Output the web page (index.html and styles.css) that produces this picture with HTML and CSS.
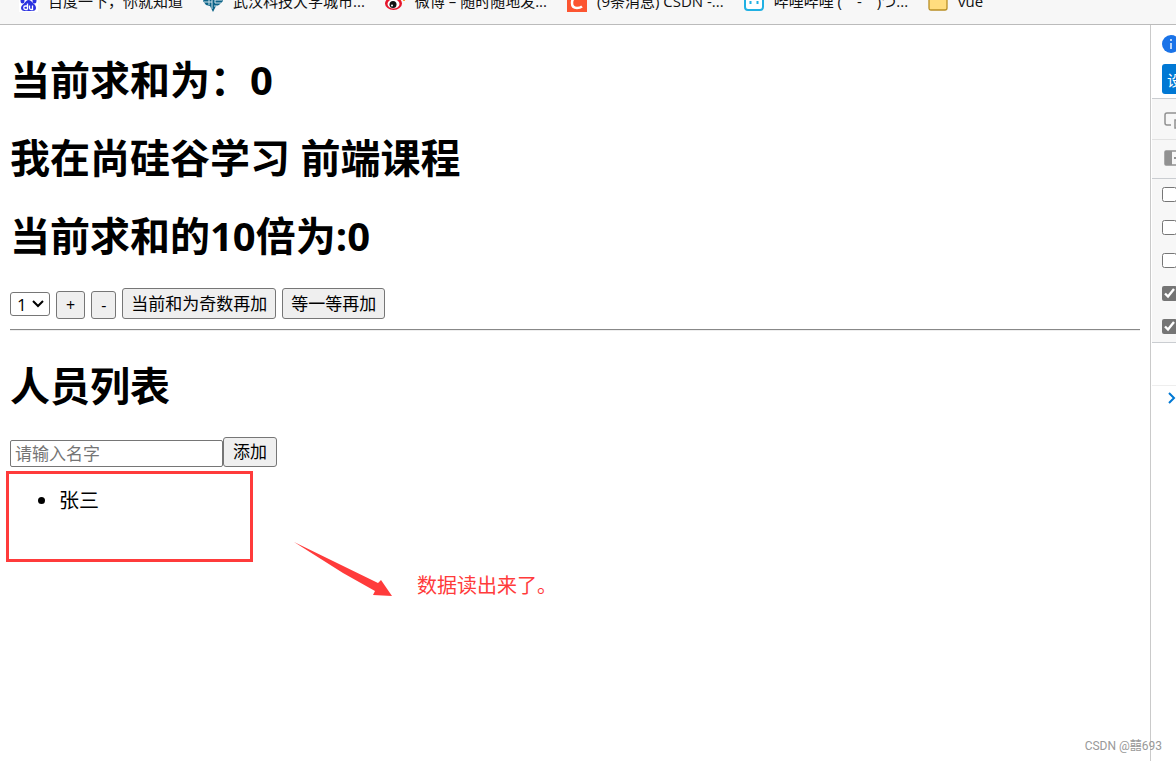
FILE: index.html
```html
<!DOCTYPE html>
<html lang="zh-CN">
<head>
    <meta charset="UTF-8">
    <meta name="viewport" content="width=device-width, initial-scale=1.0">
    <title>求和</title>
    <link rel="stylesheet" href="styles.css">
</head>
<body>
    <nav class="bookmarks">
        <a href="#" class="bookmark">
            <svg width="20" height="20" viewBox="0 0 20 20">
                <rect x="1" y="0" width="19" height="20" fill="#fff"/>
                <g fill="#2b32e0">
                    <ellipse cx="4.500" cy="9" rx="2" ry="2.500"/>
                    <ellipse cx="8" cy="5" rx="2" ry="2.500"/>
                    <ellipse cx="13" cy="5" rx="2" ry="2.500"/>
                    <ellipse cx="16.500" cy="9" rx="2" ry="2.500"/>
                    <path d="M10.500 8c-2 0-3 2-4.500 3.500S3 14 3 16s1.500 3 3.500 3h8c2 0 3.500-1 3.500-3s-1-3-2.500-4.500S12.500 8 10.500 8z"/>
                </g>
                <path d="M9.500 11.500v6M9.500 14H7.500a1.500 1.500 0 0 0 0 3.500H9.500M11.500 13.500v2.500q0 1.500 1.500 1.500h1.500v-4" fill="none" stroke="#fff" stroke-width="1.300"/>
            </svg>
            <span>百度一下，你就知道</span>
        </a>
        <a href="#" class="bookmark">
            <svg width="20" height="20" viewBox="0 0 20 20">
                <path d="M4 2h12l4 7-4 4-3 1-3 6-3-6-4-1-3-4z" fill="#0c6488"/>
                <path d="M1 10h8v7M12 8v3h6M12 8h7M11 14h3M6 8v5M9 7v3" fill="none" stroke="#cfe2ea" stroke-width="1"/>
            </svg>
            <span>武汉科技大学城市...</span>
        </a>
        <a href="#" class="bookmark">
            <svg width="20" height="20" viewBox="0 0 20 20">
                <ellipse cx="8.500" cy="11.500" rx="8.500" ry="6.500" fill="#e6162d"/>
                <ellipse cx="8.500" cy="12" rx="6" ry="4.500" fill="#fff"/>
                <circle cx="8" cy="12.500" r="3.500" fill="#111"/>
                <circle cx="7" cy="13.500" r="1" fill="#fff"/>
                <path d="M13 3q6-1 6 6" fill="none" stroke="#ff9933" stroke-width="2"/>
            </svg>
            <span>微博 – 随时随地发...</span>
        </a>
        <a href="#" class="bookmark">
            <svg width="20" height="20" viewBox="0 0 20 20">
                <rect width="20" height="20" fill="#fc5531"/>
                <path d="M15.500 5.500Q13 3.500 9.500 4.500 5 6 5 11q0 5 5 5 3 0 5-1.500" fill="none" stroke="#fff" stroke-width="2.500"/>
            </svg>
            <span>(9条消息) CSDN -...</span>
        </a>
        <a href="#" class="bookmark">
            <svg width="20" height="20" viewBox="0 0 20 20">
                <path d="M5 0l3 3M15 0l-3 3" stroke="#20b0e3" stroke-width="2"/>
                <rect x="1" y="4" width="18" height="14" rx="3" fill="#fff" stroke="#20b0e3" stroke-width="2"/>
                <path d="M6.500 9v3M13.500 9v3" stroke="#20b0e3" stroke-width="2"/>
            </svg>
            <span>哔哩哔哩 (゜-゜)つ...</span>
        </a>
        <a href="#" class="bookmark">
            <svg width="20" height="20" viewBox="0 0 20 20">
                <path d="M1 3h7l2 2h9v11q0 2-2 2H3q-2 0-2-2z" fill="#ffdd7e" stroke="#b98f25" stroke-width="1.300"/>
            </svg>
            <span>vue</span>
        </a>
    </nav>

    <div class="window">
        <main>
            <h1>当前求和为：0</h1>
            <h1>我在尚硅谷学习 前端课程</h1>
            <h1>当前求和的10倍为:0</h1>
            <div class="controls">
                <select aria-label="数字">
                    <option>1</option>
                    <option>2</option>
                    <option>3</option>
                </select>
                <button type="button">+</button>
                <button type="button">-</button>
                <button type="button" class="wide">当前和为奇数再加</button>
                <button type="button" class="wide">等一等再加</button>
            </div>
            <hr>
            <h1>人员列表</h1>
            <div class="add-person">
                <input type="text" placeholder="请输入名字" aria-label="名字">
                <button type="button">添加</button>
            </div>
            <div class="result">
                <div class="marked">
                    <ul>
                        <li>张三</li>
                    </ul>
                </div>
                <svg class="arrow" width="100" height="56" viewBox="0 0 100 56">
                    <path d="M0 0L84 41 87 38 98 54 79 53 81 49 49 31z" fill="#ff3b3b"/>
                </svg>
                <p class="note">数据读出来了。</p>
            </div>
        </main>

        <aside class="devtools">
            <div class="infobar">
                <svg width="18" height="18" viewBox="0 0 18 18">
                    <circle cx="9" cy="9" r="9" fill="#1a73e8"/>
                    <path d="M9 4v2M9 8v6" stroke="#b9d4f8" stroke-width="2"/>
                </svg>
                <button type="button">设</button>
            </div>
            <div class="toolbar tabs">
                <svg width="20" height="20" viewBox="0 0 20 20">
                    <path d="M9 14H5q-2 0-2-2V4q0-2 2-2h12q2 0 2 2v4" fill="none" stroke="#919191" stroke-width="1.500"/>
                    <path d="M13 9h6v8h-6z" fill="#f3f3f3" stroke="#919191" stroke-width="1.500"/>
                </svg>
            </div>
            <div class="toolbar">
                <svg width="20" height="20" viewBox="0 0 20 20">
                    <rect x="3" y="3" width="20" height="14" rx="1" fill="none" stroke="#919191" stroke-width="1.500"/>
                    <path d="M3 3h7v14H3zM12 9h8v2h-8z" fill="#919191"/>
                </svg>
            </div>
            <div class="settings">
                <input type="checkbox" aria-label="隐藏网络">
                <input type="checkbox" aria-label="保留日志">
                <input type="checkbox" aria-label="仅已选上下文">
                <input type="checkbox" aria-label="分组相似消息" checked>
                <input type="checkbox" aria-label="显示错误" checked>
            </div>
            <div class="console">
                <svg width="10" height="12" viewBox="0 0 10 12">
                    <path d="M2 1l5 5-5 5" fill="none" stroke="#0078d4" stroke-width="2"/>
                </svg>
            </div>
        </aside>
    </div>
    <div class="watermark">CSDN @囍693</div>
</body>
</html>
```
FILE: styles.css
```css
* {
    box-sizing: border-box;
}

body {
    margin: 0;
    min-height: 100vh;
    display: flex;
    flex-direction: column;
    position: relative;
    overflow: hidden;
    background: #fff;
    color: #000;
    font-family: "Open Sans", "Noto Sans CJK SC", sans-serif;
    font-size: 20px;
    line-height: 26px;
}

svg {
    display: block;
    flex-shrink: 0;
}

/* Barra de favoritos, cortada no topo */
.bookmarks {
    display: flex;
    align-items: flex-end;
    gap: 20px;
    height: 25px;
    padding: 0 18px 12px;
    overflow: hidden;
    background: #f7f7f7;
    border-bottom: 1px solid #bbb;
}

.bookmark {
    display: flex;
    align-items: flex-end;
    gap: 10px;
    color: #111;
    font-size: 15px;
    line-height: 22px;
    text-decoration: none;
    white-space: nowrap;
}

.window {
    flex: 1;
    display: flex;
}

main {
    flex: 1;
    padding: 3px 10px 10px;
}

h1 {
    margin: 26px 0;
    font-size: 40px;
    line-height: 52px;
    font-weight: bold;
}

button,
select,
input {
    margin: 0;
    font-family: inherit;
    font-size: 17px;
    color: #000;
}

main button {
    height: 30px;
    padding: 0 9px;
    background: #efefef;
    border: 1px solid #767676;
    border-radius: 3px;
    line-height: 24px;
}

.controls {
    display: flex;
    align-items: flex-end;
    gap: 6px;
}

.controls button {
    height: 28px;
    font-size: 16px;
}

.controls .wide {
    height: 31px;
    padding: 0 8px;
    font-size: 17px;
}

.controls select {
    width: 40px;
    height: 24px;
    margin-bottom: 3px;
    padding: 0 0 2px 6px;
    appearance: none;
    background: #fff url("data:image/svg+xml,%3Csvg xmlns='http://www.w3.org/2000/svg' width='12' height='8'%3E%3Cpath d='M1 1l5 5 5-5' fill='none' stroke='black' stroke-width='2'/%3E%3C/svg%3E") no-repeat right 5px center;
    border: 1px solid #767676;
    border-radius: 3px;
}

hr {
    margin: 10px 0 0;
    border: 0;
    border-top: 1px solid #888;
    border-bottom: 1px solid #eee;
}

hr + h1 {
    margin: 29px 0 25px;
}

.add-person {
    display: flex;
    align-items: flex-end;
}

.add-person input {
    width: 213px;
    height: 27px;
    padding: 0 4px;
    border: 1px solid #767676;
    border-radius: 2px;
}

.add-person input::placeholder {
    color: #757575;
}

.result {
    display: flex;
    align-items: flex-start;
    margin: 4px 0 0 -4px;
}

.marked {
    width: 247px;
    height: 91px;
    border: 3px solid #ff3b3b;
}

.marked ul {
    margin: 14px 0;
    padding-left: 50px;
}

.arrow {
    margin: 71px 0 0 41px;
}

.note {
    margin: 102px 0 0 23px;
    color: #ff3b3b;
}

.devtools {
    width: 26px;
    padding-left: 1px;
    overflow: hidden;
    border-left: 1px solid #cacaca;
}

.infobar {
    display: flex;
    flex-direction: column;
    gap: 11px;
    height: 74px;
    padding: 10px 0 0 10px;
    border-bottom: 1px solid #cacdd1;
}

.infobar button {
    width: 60px;
    height: 30px;
    padding: 0 5px;
    background: #0078d4;
    border: 0;
    border-radius: 3px;
    color: #fff;
    font-size: 15px;
    text-align: left;
}

.toolbar {
    height: 39px;
    padding: 8px 0 0 10px;
    background: #f7f7f7;
    border-bottom: 1px solid #cacdd1;
}

.toolbar.tabs {
    height: 41px;
    padding-top: 12px;
    border-bottom-color: #e2e2e2;
}

.settings {
    display: flex;
    flex-direction: column;
    gap: 18px;
    height: 164px;
    padding: 8px 0 0 10px;
    background: #f7f7f7;
    border-bottom: 1px solid #cacdd1;
}

.settings input {
    flex-shrink: 0;
    width: 15px;
    height: 15px;
    accent-color: #757575;
}

.console {
    margin-top: 42px;
    padding: 6px 0 0 15px;
    border-top: 1px solid #eee;
}

.watermark {
    position: absolute;
    right: 14px;
    bottom: 5px;
    color: #999;
    font-family: Roboto, "Noto Sans CJK SC", sans-serif;
    font-size: 12px;
    line-height: 20px;
}
```
